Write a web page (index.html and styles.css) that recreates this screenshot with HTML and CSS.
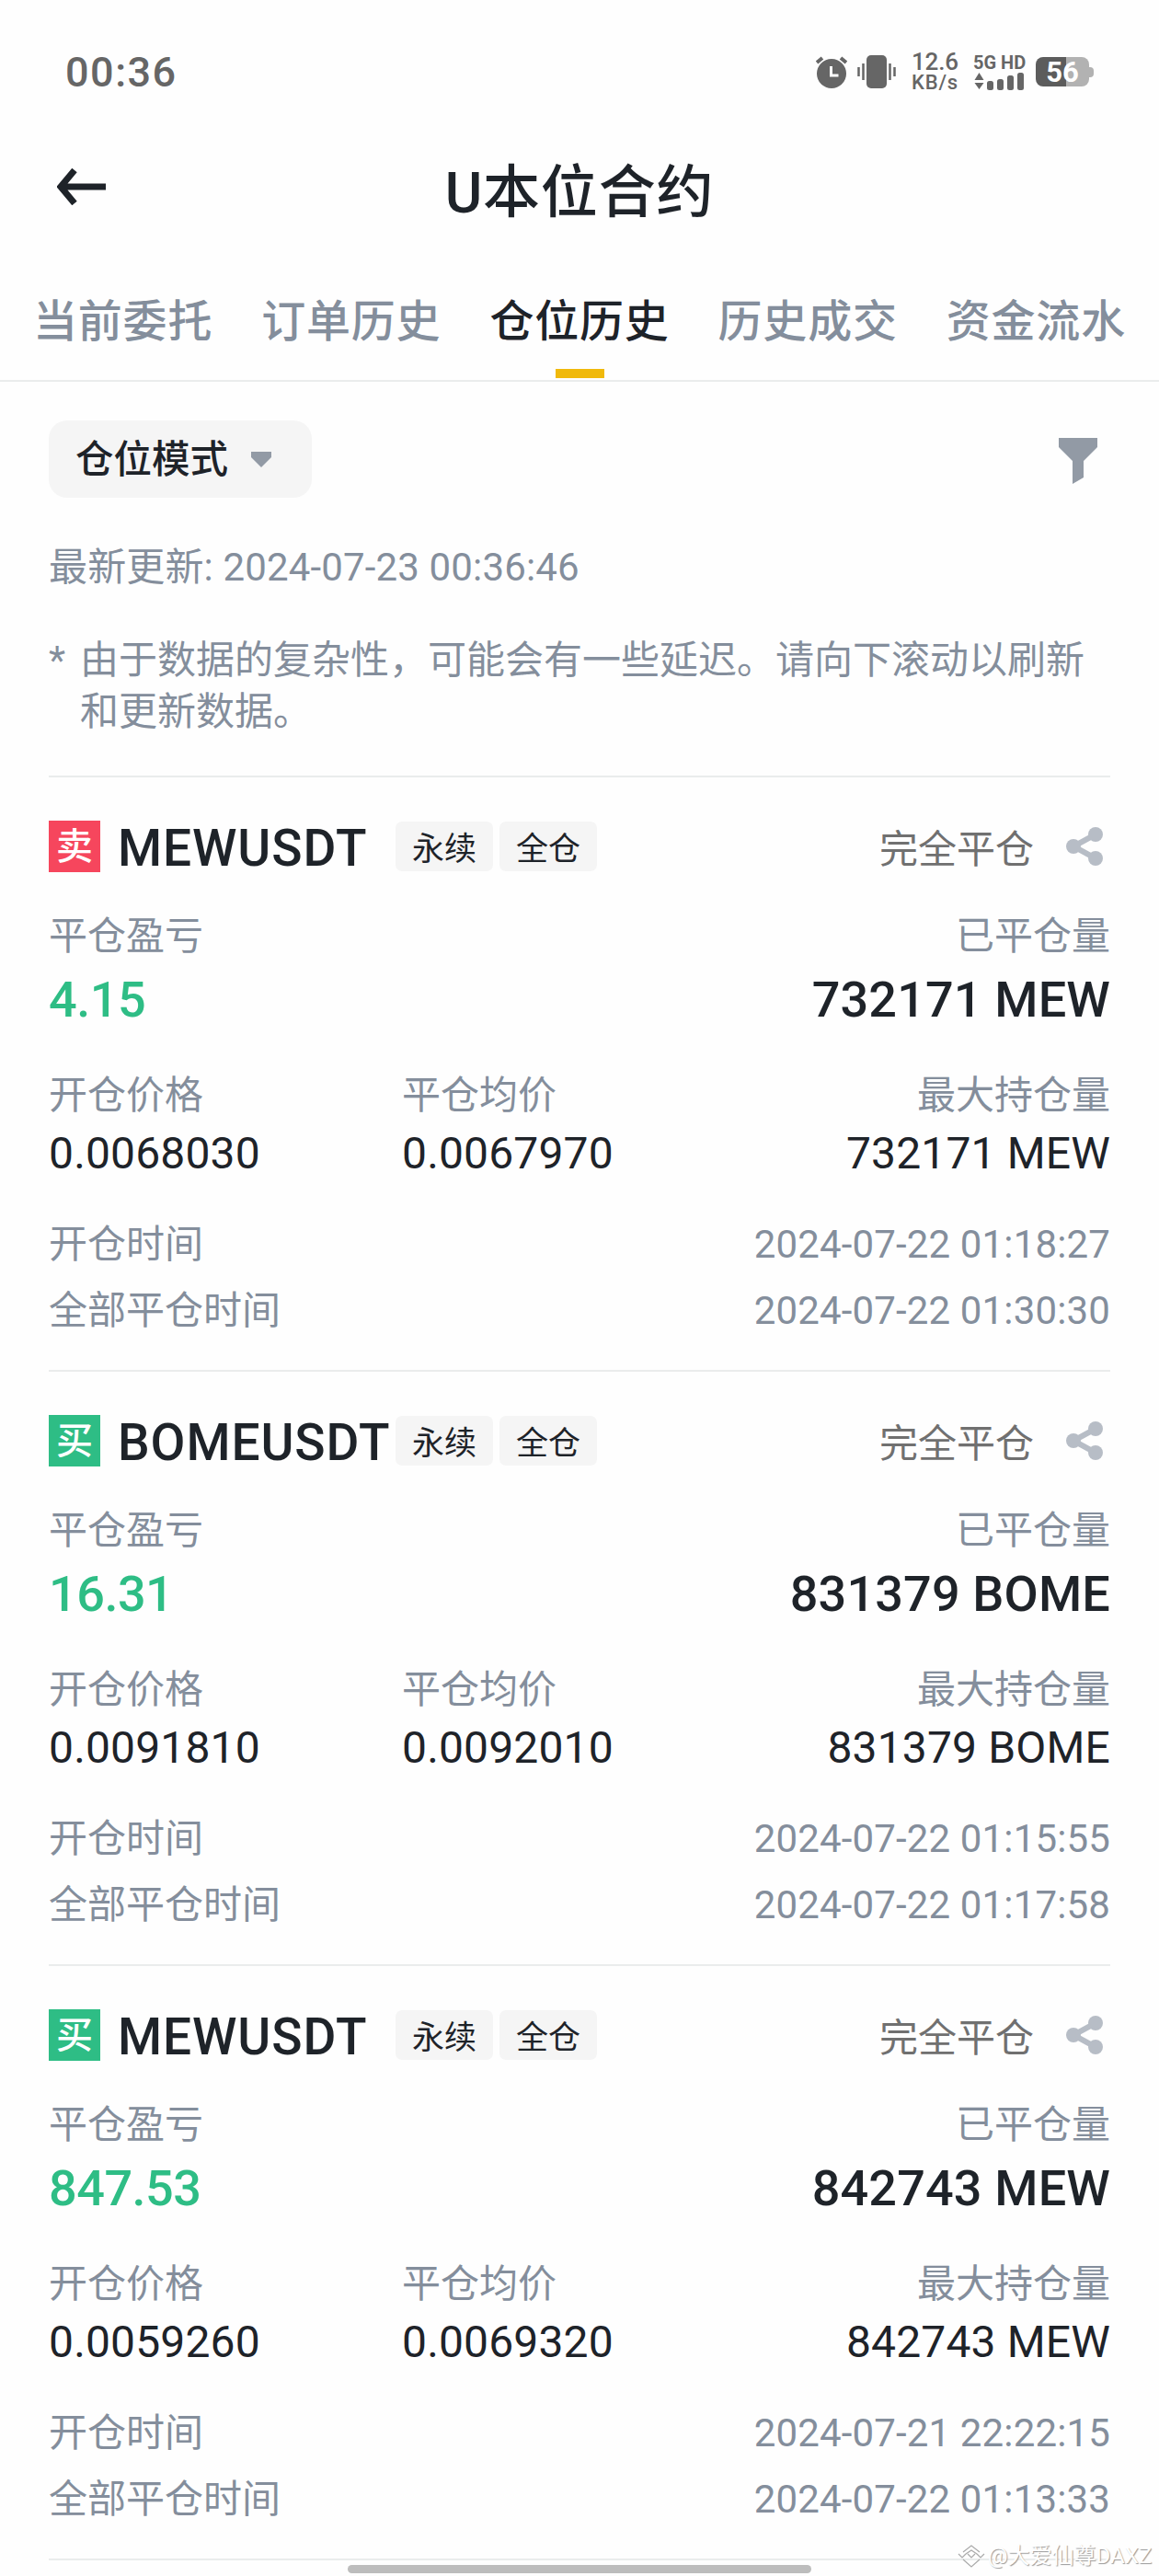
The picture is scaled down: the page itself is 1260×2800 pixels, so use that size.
FILE: index.html
```html
<!DOCTYPE html>
<html lang="zh-CN">
<head>
<meta charset="utf-8">
<title>U本位合约</title>
<link rel="stylesheet" href="styles.css">
</head>
<body>
<svg class="defs" width="0" height="0" aria-hidden="true">
  <symbol id="share" viewBox="0 0 40 42">
    <path d="M32 8 8 21l24 13" fill="none" stroke="currentColor" stroke-width="6"/>
    <circle cx="32" cy="8" r="8" fill="currentColor"/><circle cx="8" cy="21" r="8" fill="currentColor"/><circle cx="32" cy="34" r="8" fill="currentColor"/>
  </symbol>
</svg>
<div class="screen">
  <div class="status">
    <span class="clock">00:36</span>
    <div class="indicators">
      <svg class="alarm" width="34" height="36" viewBox="0 0 34 36">
        <circle cx="17" cy="20" r="16" fill="#666"/>
        <path d="M1 8 7 3M27 3l6 5" stroke="#666" stroke-width="4"/>
        <path d="M16.500 12v10h8" fill="none" stroke="#fff" stroke-width="3"/>
      </svg>
      <svg class="vibrate" width="42" height="36" viewBox="0 0 42 36">
        <rect x="10" y="0" width="22" height="36" rx="5" fill="#666"/>
        <path d="M1.500 13v10M6.500 9v18M35.500 9v18M40.500 13v10" stroke="#666" stroke-width="2.500"/>
      </svg>
      <div class="speed"><span class="rate">12.6</span><span class="unit">KB/s</span></div>
      <div class="network">
        <span class="net-type">5G HD</span>
        <svg width="56" height="20" viewBox="0 0 56 20" fill="#666">
          <path d="M6.500 0l5 8h-10zM6.500 18l5-7h-10z"/>
          <rect x="15" y="9" width="7" height="10" rx="2.500"/><rect x="26" y="7" width="7" height="12" rx="2.500"/><rect x="37" y="3" width="7" height="16" rx="2.500"/><rect x="48" y="0" width="7" height="19" rx="2.500"/>
        </svg>
      </div>
      <div class="battery"><span>56</span></div>
    </div>
  </div>

  <header class="header">
    <svg class="back" width="53" height="40" viewBox="0 0 53 40"><path d="M19 2 4 20l15 18M4 20h49" fill="none" stroke="#1e2329" stroke-width="7"/></svg>
    <h1>U本位合约</h1>
  </header>

  <nav class="tabs">
    <span class="tab">当前委托</span>
    <span class="tab">订单历史</span>
    <span class="tab active">仓位历史</span>
    <span class="tab">历史成交</span>
    <span class="tab">资金流水</span>
  </nav>

  <main class="content">
    <div class="filters">
      <div class="mode"><span>仓位模式</span>
        <svg width="22" height="17" viewBox="0 0 22 17"><path d="M0 0h22v6L11 17 0 6z" fill="#929aa5"/></svg>
      </div>
      <svg class="funnel" width="42" height="50" viewBox="0 0 42 50"><path d="M0 0h42v10L27 25v18l-12 7V25L0 10z" fill="#929aa5"/></svg>
    </div>
    <p class="updated">最新更新: 2024-07-23 00:36:46</p>
    <div class="notice"><span>*</span><p>由于数据的复杂性，可能会有一些延迟。请向下滚动以刷新和更新数据。</p></div>

    <article class="card">
      <div class="card-head">
        <span class="side sell">卖</span><span class="symbol">MEWUSDT</span>
        <span class="tag">永续</span><span class="tag">全仓</span>
        <span class="state">完全平仓</span><svg class="share" width="40" height="42"><use href="#share"/></svg>
      </div>
      <div class="summary">
        <span class="label">平仓盈亏</span><span class="label">已平仓量</span>
        <span class="big profit">4.15</span><span class="big">732171 MEW</span>
      </div>
      <div class="prices">
        <span class="label">开仓价格</span><span class="label">平仓均价</span><span class="label">最大持仓量</span>
        <span class="value">0.0068030</span><span class="value">0.0067970</span><span class="value">732171 MEW</span>
      </div>
      <div class="times">
        <div class="time"><span>开仓时间</span><span>2024-07-22 01:18:27</span></div>
        <div class="time"><span>全部平仓时间</span><span>2024-07-22 01:30:30</span></div>
      </div>
    </article>

    <article class="card">
      <div class="card-head">
        <span class="side buy">买</span><span class="symbol">BOMEUSDT</span>
        <span class="tag">永续</span><span class="tag">全仓</span>
        <span class="state">完全平仓</span><svg class="share" width="40" height="42"><use href="#share"/></svg>
      </div>
      <div class="summary">
        <span class="label">平仓盈亏</span><span class="label">已平仓量</span>
        <span class="big profit">16.31</span><span class="big">831379 BOME</span>
      </div>
      <div class="prices">
        <span class="label">开仓价格</span><span class="label">平仓均价</span><span class="label">最大持仓量</span>
        <span class="value">0.0091810</span><span class="value">0.0092010</span><span class="value">831379 BOME</span>
      </div>
      <div class="times">
        <div class="time"><span>开仓时间</span><span>2024-07-22 01:15:55</span></div>
        <div class="time"><span>全部平仓时间</span><span>2024-07-22 01:17:58</span></div>
      </div>
    </article>

    <article class="card">
      <div class="card-head">
        <span class="side buy">买</span><span class="symbol">MEWUSDT</span>
        <span class="tag">永续</span><span class="tag">全仓</span>
        <span class="state">完全平仓</span><svg class="share" width="40" height="42"><use href="#share"/></svg>
      </div>
      <div class="summary">
        <span class="label">平仓盈亏</span><span class="label">已平仓量</span>
        <span class="big profit">847.53</span><span class="big">842743 MEW</span>
      </div>
      <div class="prices">
        <span class="label">开仓价格</span><span class="label">平仓均价</span><span class="label">最大持仓量</span>
        <span class="value">0.0059260</span><span class="value">0.0069320</span><span class="value">842743 MEW</span>
      </div>
      <div class="times">
        <div class="time"><span>开仓时间</span><span>2024-07-21 22:22:15</span></div>
        <div class="time"><span>全部平仓时间</span><span>2024-07-22 01:13:33</span></div>
      </div>
    </article>
    <hr class="end">
  </main>

  <div class="home-bar"></div>
  <div class="watermark">
    <svg width="30" height="26" viewBox="0 0 30 26" fill="none" stroke="#aaa" stroke-width="1.200"><path d="M6 9l9-7 9 7M1 11l4 4 4-4M11 11l4 4 4-4M21 11l4 4 4-4M6 17l9 8 9-8M9 11l6-4 6 4"/></svg>
    <span>@大爱仙尊DAXZ</span>
  </div>
</div>
</body>
</html>
```
FILE: styles.css
```css
* { box-sizing: border-box; }
body {
  margin: 0;
  background: #fefefe;
  color: #1e2329;
  font-family: Roboto, "Noto Sans CJK SC", sans-serif;
}
h1, p { margin: 0; }
svg { display: block; flex: none; }
.defs { position: absolute; }
.screen { position: relative; width: 1260px; height: 2800px; overflow: hidden; }

.status {
  display: flex;
  justify-content: space-between;
  align-items: center;
  height: 156px;
  padding: 0 70px 0 71px;
  color: #666;
}
.clock { font-size: 45px; font-weight: 500; letter-spacing: 1.5px; }
.indicators { display: flex; align-items: center; height: 44px; }
.alarm { margin-right: 11px; }
.vibrate { margin-right: 17px; }
.speed { width: 67px; font-weight: 500; }
.speed span { display: block; }
.rate { font-size: 26px; line-height: 24px; letter-spacing: -0.2px; }
.unit { font-size: 22px; line-height: 22px; letter-spacing: 0.8px; }
.network { width: 68px; }
.net-type { display: block; font-size: 20px; line-height: 20px; font-weight: 700; white-space: nowrap; margin-bottom: 1px; }
.battery {
  position: relative;
  width: 58px;
  height: 32px;
  margin-right: 6px;
  border-radius: 8px;
  background: linear-gradient(90deg, #5c5c5c 57%, #b2b2b2 57%);
  color: #fff;
  font-size: 31px;
  font-weight: 700;
  line-height: 33px;
  text-align: center;
}
.battery::after {
  content: "";
  position: absolute;
  right: -5px;
  top: 11px;
  width: 5px;
  height: 11px;
  border-radius: 0 4px 4px 0;
  background: #b2b2b2;
}

.header {
  display: grid;
  grid-template-columns: 1fr auto 1fr;
  align-items: center;
  height: 108px;
  padding: 0 62px;
}
.back { margin-top: -15px; }
h1 { font-size: 62px; line-height: 108px; font-weight: 500; letter-spacing: 0.8px; }

.tabs {
  display: flex;
  justify-content: space-between;
  height: 151px;
  padding: 51px 36px 0;
  border-bottom: 2px solid #eaecec;
}
.tab {
  position: relative;
  color: #848e9c;
  font-size: 48px;
  font-weight: 500;
  line-height: 70px;
  letter-spacing: 0.8px;
  white-space: nowrap;
}
.active { color: #1e2329; }
.active::after {
  content: "";
  position: absolute;
  left: calc(50% - 26px);
  top: 86px;
  width: 53px;
  height: 10px;
  background: #f0b90b;
}

.content { padding: 42px 53px 0; }
.filters { display: flex; justify-content: space-between; align-items: center; }
.mode {
  display: flex;
  align-items: center;
  gap: 25px;
  width: 286px;
  height: 84px;
  padding-left: 29px;
  border-radius: 20px;
  background: #f5f5f5;
  font-size: 41.500px;
  font-weight: 500;
}
.mode span { line-height: 56px; margin-top: 1px; }
.funnel { margin: 3px 14px 0 0; }
.updated { margin-top: 48px; color: #848e9c; font-size: 42px; line-height: 56px; letter-spacing: 0.15px; }
.notice { display: flex; margin-top: 45px; color: #848e9c; font-size: 42px; line-height: 56px; }
.notice span { width: 34px; }
.notice p { width: 1110px; }

.card { height: 646px; padding-top: 47px; border-top: 2px solid #eaecec; }
.notice + .card { margin-top: 41px; }
.card-head { display: flex; align-items: center; height: 56px; }
.side {
  width: 56px;
  height: 56px;
  margin-right: 19px;
  color: #fff;
  font-size: 40px;
  font-weight: 500;
  line-height: 58px;
  text-align: center;
}
.sell { background: #f6465d; }
.buy { background: #2ebd85; }
.symbol { width: 302px; font-size: 55px; font-weight: 500; line-height: 60px; letter-spacing: 0.9px; margin-top: 4px; }
.tag {
  width: 106px;
  height: 54px;
  margin-right: 7px;
  border-radius: 7px;
  background: #f5f5f5;
  font-size: 35px;
  line-height: 61px;
  text-align: center;
}
.state { margin: 8px 35px 0 auto; color: #707070; font-size: 42px; line-height: 56px; }
.share { margin-right: 8px; color: #b7bdc6; }
.summary { display: grid; grid-template-columns: 1fr 1fr; margin-top: 42px; }
.summary > :nth-child(even), .prices > :nth-child(3n) { text-align: right; }
.label { color: #848e9c; font-size: 42px; line-height: 56px; }
.big { font-size: 54px; font-weight: 500; line-height: 82px; letter-spacing: 0.15px; }
.profit { color: #2ebd85; letter-spacing: -0.5px; }
.prices { display: grid; grid-template-columns: 384px 386px 1fr; margin-top: 35px; }
.value { font-size: 48px; line-height: 69px; letter-spacing: 0.15px; }
.times { margin-top: 29px; }
.time { display: flex; justify-content: space-between; color: #848e9c; font-size: 42px; line-height: 72px; }
.time span:last-child { letter-spacing: 0.15px; }
.end { height: 2px; margin: 0; border: 0; background: #eaecec; }

.home-bar {
  position: absolute;
  left: 378px;
  top: 2788px;
  width: 504px;
  height: 9px;
  border-radius: 5px;
  background: #bdbdbd;
}
.watermark {
  position: absolute;
  left: 1041px;
  top: 2762px;
  display: flex;
  align-items: center;
  gap: 3px;
  color: #fff;
  font-size: 24px;
  line-height: 32px;
  text-shadow: 1px 1px 1px #999;
}
```
